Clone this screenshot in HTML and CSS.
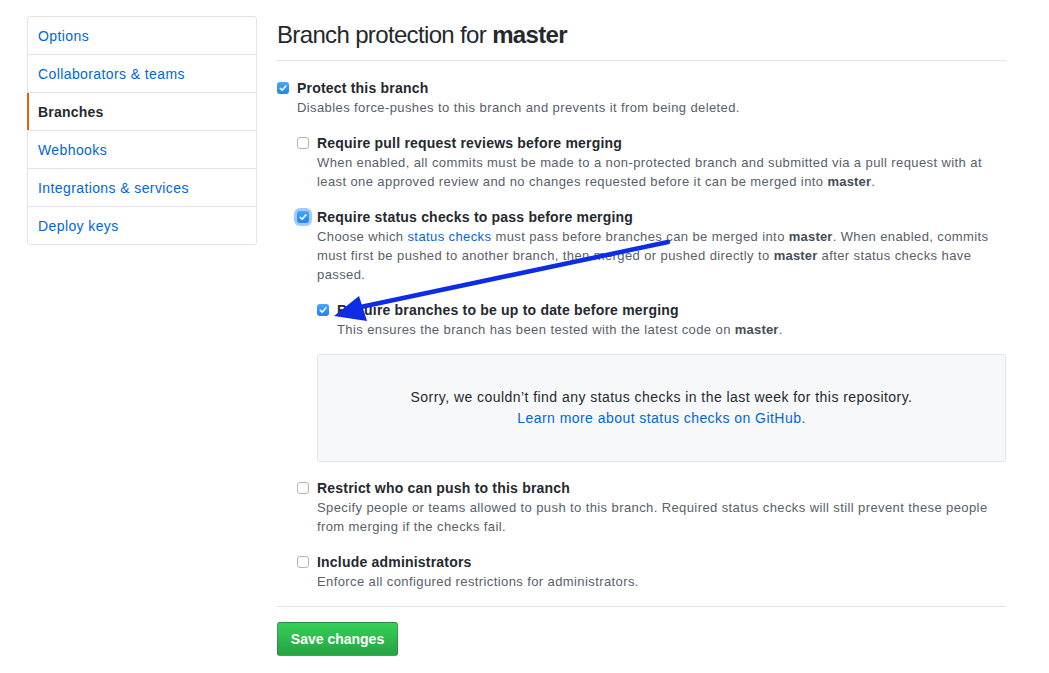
FILE: index.html
```html
<!DOCTYPE html>
<html lang="en">
<head>
  <title>Branches</title>
  <link rel="stylesheet" href="styles.css">
</head>
<body>

  <div class="container">
    <nav class="menu">
      <a class="menu-item" href="#">Options</a>
      <a class="menu-item" href="#">Collaborators &amp; teams</a>
      <a class="menu-item selected" href="#">Branches</a>
      <a class="menu-item" href="#">Webhooks</a>
      <a class="menu-item" href="#">Integrations &amp; services</a>
      <a class="menu-item" href="#">Deploy keys</a>
    </nav>

    <div class="settings">
      <h2 class="title">Branch protection for <strong>master</strong></h2>

      <div class="option first">
        <span class="checkbox checked"></span>
        <div class="option-body">
          <label>Protect this branch</label>
          <p class="note">Disables force-pushes to this branch and prevents it from being deleted.</p>

          <div class="option">
            <span class="checkbox"></span>
            <div class="option-body">
              <label>Require pull request reviews before merging</label>
              <p class="note">When enabled, all commits must be made to a non-protected branch and submitted via a pull request with at least one approved review and no changes requested before it can be merged into <strong>master</strong>.</p>
            </div>
          </div>

          <div class="option">
            <span class="checkbox checked focused"></span>
            <div class="option-body">
              <label>Require status checks to pass before merging</label>
              <p class="note">Choose which <a href="#">status checks</a> must pass before branches can be merged into <strong>master</strong>. When enabled, commits must first be pushed to another branch, then merged or pushed directly to <strong>master</strong> after status checks have passed.</p>

              <div class="option">
                <span class="checkbox checked"></span>
                <div class="option-body">
                  <label>Require branches to be up to date before merging</label>
                  <p class="note">This ensures the branch has been tested with the latest code on <strong>master</strong>.</p>
                </div>
              </div>

              <div class="blankslate">
                <p>Sorry, we couldn’t find any status checks in the last week for this repository.</p>
                <p><a href="#">Learn more about status checks on GitHub.</a></p>
              </div>
            </div>
          </div>

          <div class="option">
            <span class="checkbox"></span>
            <div class="option-body">
              <label>Restrict who can push to this branch</label>
              <p class="note">Specify people or teams allowed to push to this branch. Required status checks will still prevent these people from merging if the checks fail.</p>
            </div>
          </div>

          <div class="option">
            <span class="checkbox"></span>
            <div class="option-body">
              <label>Include administrators</label>
              <p class="note">Enforce all configured restrictions for administrators.</p>
            </div>
          </div>
        </div>
      </div>

      <div class="form-actions">
        <button type="submit" class="btn-primary">Save changes</button>
      </div>
    </div>
  </div>

  <!-- annotation arrow drawn over the screenshot -->
  <svg class="arrow" width="1049" height="673" viewBox="0 0 1049 673">
    <line x1="668" y1="242" x2="356" y2="308" stroke="#0c2ce6" stroke-width="4.5" stroke-linecap="round"/>
    <polygon points="334,316 359,296 367,321" fill="#0c2ce6"/>
  </svg>

</body>
</html>
```

FILE: styles.css
```css
body {
  font-family: "Liberation Sans", Arial, sans-serif;
  font-size: 14px;
  color: #24292e;
  margin: 0;
  background-color: #fff;
}

a {
  color: #0366d6;
  text-decoration: none;
}

.container {
  display: flex;
  align-items: flex-start;
  padding: 16px 0 0 27px;
}

/* left menu */

.menu {
  width: 230px;
  box-sizing: border-box;
  margin-right: 20px;
  border: 1px solid #e1e4e8;
  border-radius: 3px;
  display: flex;
  flex-direction: column;
}

.menu-item {
  position: relative;
  display: block;
  height: 37px;
  line-height: 38px;
  padding: 0 10px;
  letter-spacing: 0.4px;
  border-top: 1px solid #e1e4e8;
}

.menu-item:first-child {
  border-top: none;
}

.menu-item.selected {
  color: #24292e;
  font-weight: bold;
  letter-spacing: 0.2px;
}

.menu-item.selected::before {
  content: "";
  position: absolute;
  left: -1px;
  top: 0;
  bottom: 0;
  width: 2px;
  background-color: #e36209;
}

/* settings form */

.settings {
  width: 729px;
}

.title {
  margin: 4px 0 0;
  padding-bottom: 10px;
  font-size: 24px;
  font-weight: normal;
  line-height: 30px;
  letter-spacing: -0.65px;
  border-bottom: 1px solid #e1e4e8;
}

.option {
  display: grid;
  grid-template-columns: 20px 1fr;
  margin-top: 16px;
}

.option.first {
  margin-top: 17px;
}

.option label {
  display: block;
  font-weight: bold;
  line-height: 20px;
  letter-spacing: 0.2px;
}

.note {
  margin: 0;
  font-size: 13px;
  line-height: 19px;
  letter-spacing: 0.4px;
  color: #586069;
}

.note strong {
  color: #444d56;
  letter-spacing: 0.2px;
}

.checkbox {
  width: 12px;
  height: 12px;
  margin-top: 4px;
  box-sizing: border-box;
  border: 1px solid #b5b5b5;
  border-radius: 3px;
  background-color: #fff;
}

.checkbox.checked {
  border: none;
  background-image: url("data:image/svg+xml,%3Csvg xmlns='http://www.w3.org/2000/svg' viewBox='0 0 12 12'%3E%3Cpath d='M3.2 6.3 L5.1 8.2 L8.8 3.9' fill='none' stroke='%23fff' stroke-width='1.6' stroke-linecap='round' stroke-linejoin='round'/%3E%3C/svg%3E"), linear-gradient(#4aa3fd, #1f84f5);
}

.checkbox.focused {
  box-shadow: 0 0 0 3px rgba(85, 160, 250, 0.55);
}

.blankslate {
  margin-top: 15px;
  padding: 32px;
  border: 1px solid #e1e4e8;
  border-radius: 3px;
  background-color: #f6f8fa;
  text-align: center;
  letter-spacing: 0.45px;
}

.blankslate p {
  margin: 0;
  line-height: 21px;
}

.form-actions {
  margin-top: 15px;
  padding-top: 15px;
  border-top: 1px solid #e1e4e8;
}

.btn-primary {
  font-family: "Liberation Sans", Arial, sans-serif;
  font-size: 14px;
  font-weight: bold;
  line-height: 20px;
  padding: 6px 12px;
  width: 121px;
  color: #fff;
  background: linear-gradient(#34d058, #28a745 90%);
  border: 1px solid rgba(27, 31, 35, 0.2);
  border-radius: 3px;
  cursor: pointer;
}

.arrow {
  position: absolute;
  left: 0;
  top: 0;
  pointer-events: none;
}
```
